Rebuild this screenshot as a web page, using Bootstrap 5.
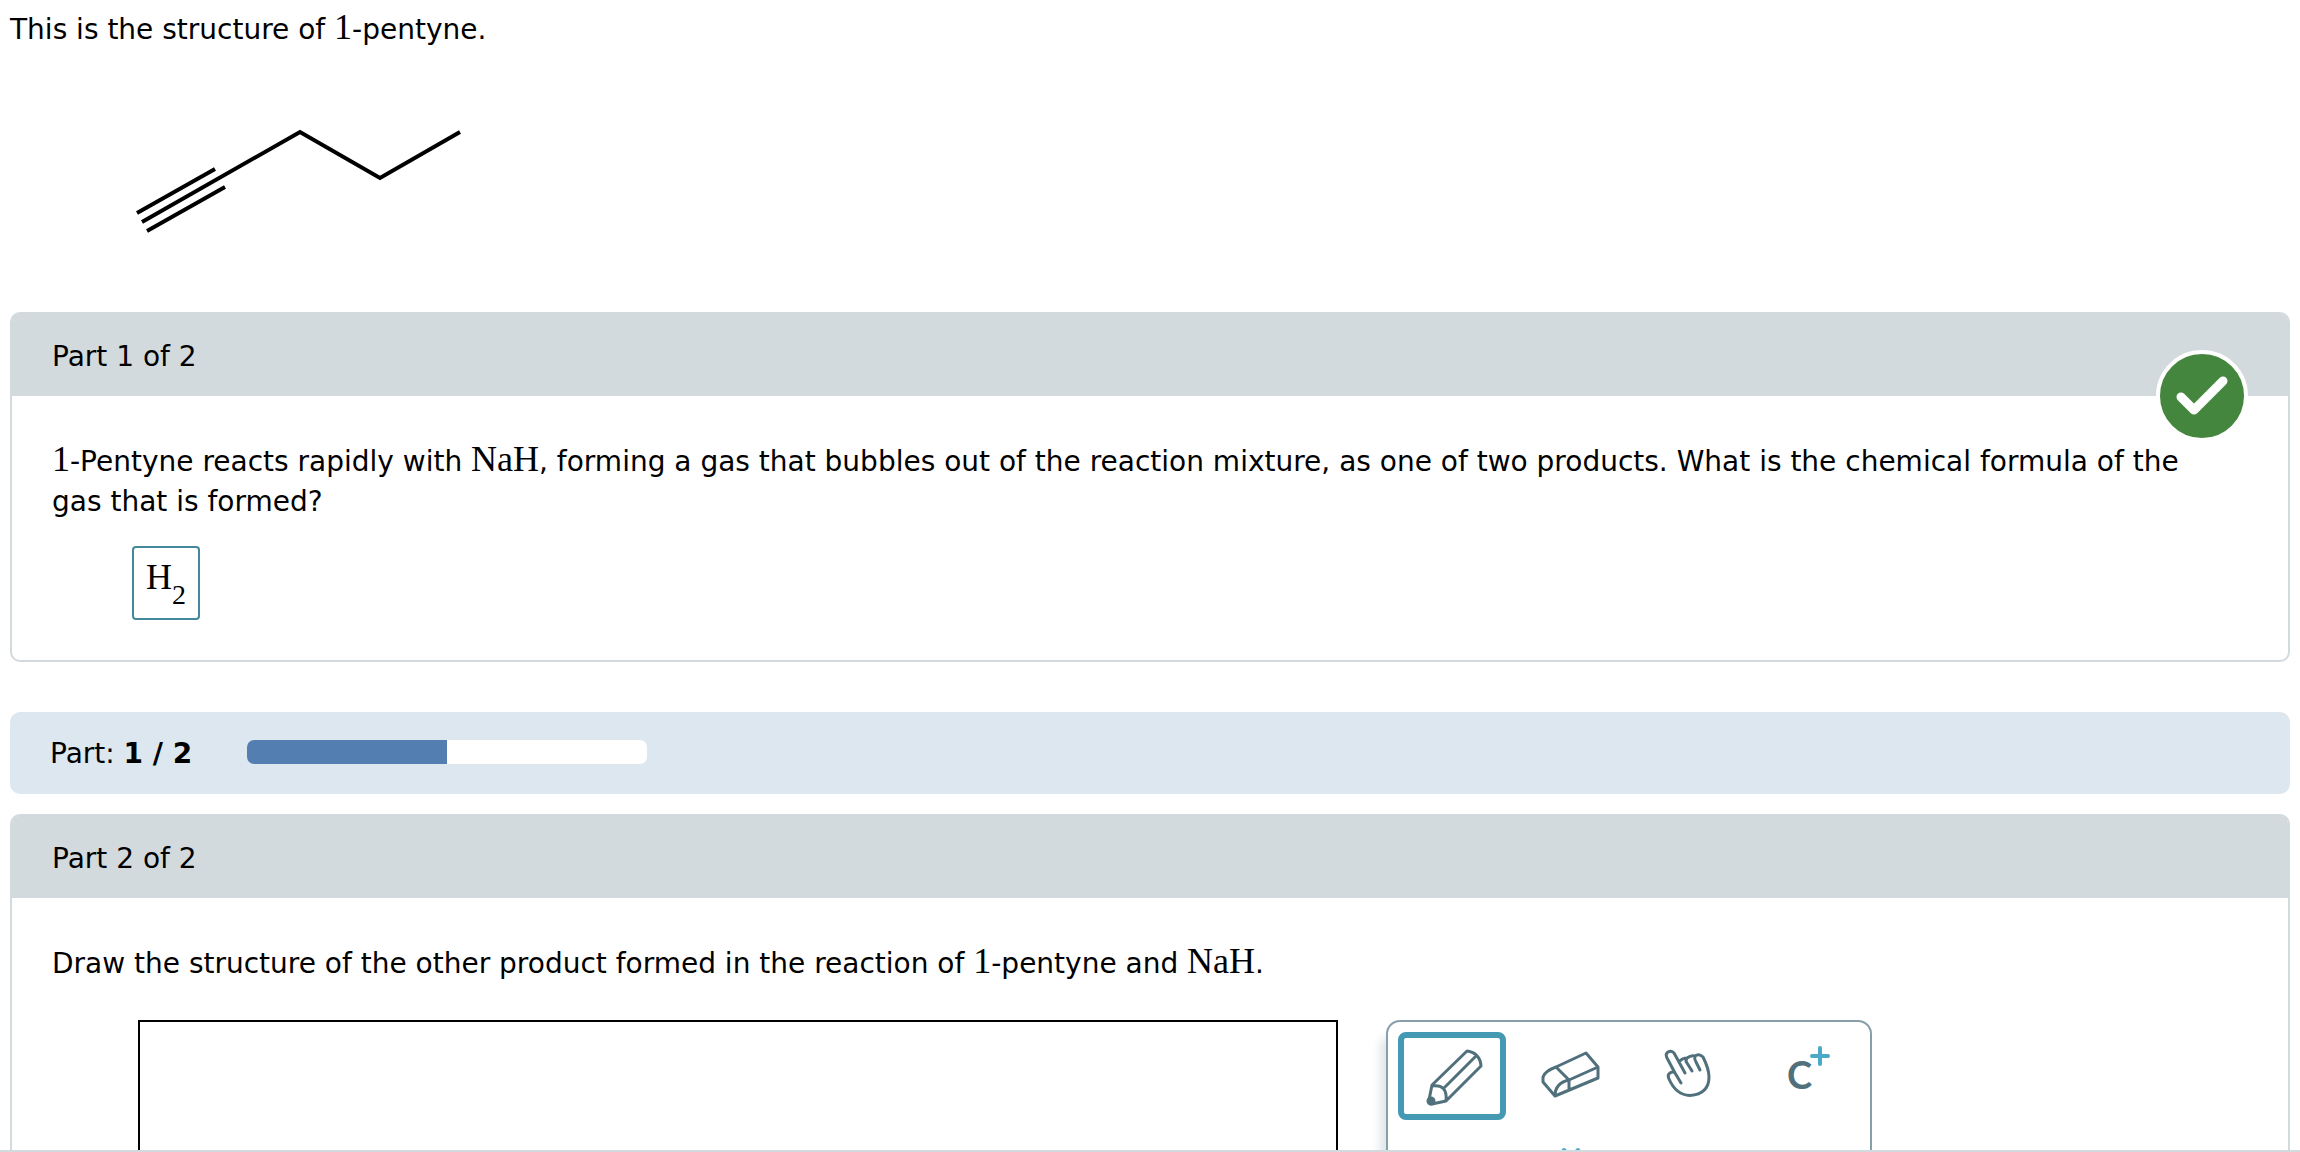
<!DOCTYPE html>
<html lang="en">
<head>
<meta charset="utf-8">
<meta name="viewport" content="width=device-width, initial-scale=1">
<title>1-Pentyne reaction</title>
<link href="https://cdn.jsdelivr.net/npm/bootstrap@5.3.0/dist/css/bootstrap.min.css" rel="stylesheet">
<style>
  body { font-family: Verdana, "DejaVu Sans", sans-serif; font-size: 28px; line-height: 40px; color: #000; background: #fff; }
  .page-scroll { min-height: 0; overflow-y: auto; scrollbar-width: none; padding: 10px; }
  .page-scroll::-webkit-scrollbar { display: none; }
  .page-foot { border-top: 2px solid #d3dadd; }
  .chem { font-family: "Liberation Serif", serif; font-size: 36px; line-height: 32px; }
  .chem sub { font-size: 28px; line-height: 28px; bottom: auto; vertical-align: -15px; }
  .molecule { width: 480px; height: 262px; }
  .part-panel { border: 2px solid #d3dadd; border-radius: 10px; }
  .part-head { background: #d3dadd; padding: 23px 40px 19px; border-radius: 7px 7px 0 0; font-size: 28px; line-height: 40px; }
  .part-body { padding: 46px 80px 40px 40px; }
  .result-badge { top: 36px; right: 40px; width: 92px; height: 92px; border: 4px solid #fff; border-radius: 50%; background: #44863e; }
  .answer-box { width: 68px; height: 74px; margin: 24px 0 0 80px; border: 2px solid #44889c; border-radius: 4px; padding: 13px 0 0; }
  .progress-strip { background: #dde7ef; border-radius: 10px; margin: 50px 0 20px; padding: 22px 40px 20px; gap: 40px; }
  .strip-label { min-width: 157px; }
  .part-meter { width: 400px; height: 24px; margin-top: 6px; border-radius: 7px; background: #fff; }
  .part-meter .progress-bar { background: #537eb1; }
  .draw-row { margin: 36px 0 0 86px; gap: 48px; }
  .draw-area { width: 1200px; height: 560px; border: 2px solid #000; }
  .toolbox { display: grid; grid-template-columns: repeat(4, 108px); grid-auto-rows: 88px; gap: 10px; padding: 10px; border: 2px solid #879fa8; border-radius: 14px; background: #fff; box-shadow: -10px 12px 10px -4px #dfe5e8; }
  .tool { padding: 0; border: 6px solid transparent; border-radius: 8px; background: #fff; color: #50707c; }
  .tool.active { border-color: #4499b3; }
  .tool svg { display: block; width: 96px; height: 76px; fill: none; stroke: currentColor; stroke-width: 3; stroke-linejoin: round; stroke-linecap: round; }
  .tool .letter { fill: currentColor; stroke: none; font: bold 38px Lato, sans-serif; }
</style>
<script src="https://cdn.jsdelivr.net/npm/bootstrap@5.3.0/dist/js/bootstrap.bundle.min.js"></script>
</head>
<body class="d-flex flex-column vh-100">
<main class="page-scroll flex-grow-1">
  <p class="m-0">This is the structure of <span class="chem">1</span>-pentyne.</p>
  <svg class="molecule d-block" viewBox="10 50 480 262" fill="none" stroke="#000" stroke-width="4" role="img" aria-label="Skeletal structure of 1-pentyne">
    <path d="M142 222L300 132L380 178L460 132M137 213L215 169M147 231L225 187"/>
  </svg>

  <section class="part-panel position-relative">
    <h2 class="part-head m-0 fw-normal">Part 1 of 2</h2>
    <div class="result-badge position-absolute">
      <svg class="d-block" width="84" height="84" viewBox="0 0 84 84" fill="none" stroke="#fff" stroke-width="9" stroke-linecap="round" stroke-linejoin="round" role="img" aria-label="Correct"><path d="M21 43L34 56L63 27"/></svg>
    </div>
    <div class="part-body">
      <p class="m-0"><span class="chem">1</span>-Pentyne reacts rapidly with <span class="chem">NaH</span>, forming a gas that bubbles out of the reaction mixture, as one of two products. What is the chemical formula of the gas that is formed?</p>
      <div class="answer-box text-center chem">H<sub>2</sub></div>
    </div>
  </section>

  <section class="progress-strip d-flex align-items-start">
    <div class="strip-label">Part: <strong>1 / 2</strong></div>
    <div class="part-meter progress" role="progressbar" aria-label="Parts complete" aria-valuenow="1" aria-valuemin="0" aria-valuemax="2">
      <div class="progress-bar" style="width: 50%"></div>
    </div>
  </section>

  <section class="part-panel">
    <h2 class="part-head m-0 fw-normal">Part 2 of 2</h2>
    <div class="part-body">
      <p class="m-0">Draw the structure of the other product formed in the reaction of <span class="chem">1</span>-pentyne and <span class="chem">NaH</span>.</p>
      <div class="draw-row d-flex align-items-start">
        <div class="draw-area"></div>
        <div class="toolbox" role="toolbar" aria-label="Drawing tools">
          <button type="button" class="tool active" aria-label="Draw">
            <svg viewBox="1404 1038 96 76"><path d="M1467 1051L1432 1085L1429 1100Q1429 1104 1432 1104L1446 1101L1481 1066Q1480 1053 1467 1051ZM1432 1086Q1448 1084 1446 1101M1444 1088L1476 1056"/><circle cx="1431" cy="1101" r="3" fill="currentColor"/></svg>
          </button>
          <button type="button" class="tool" aria-label="Erase">
            <svg viewBox="1522 1038 96 76"><path d="M1556 1067L1586 1053L1598 1067V1078L1555 1096L1543 1082V1077Q1545 1071 1556 1067L1569 1080L1598 1067M1569 1080V1089M1555 1096Q1555 1083 1569 1080"/></svg>
          </button>
          <button type="button" class="tool" aria-label="Move">
            <svg viewBox="1640 1038 96 76"><path d="M1681 1083L1675 1073Q1673 1071 1670 1073Q1667 1075 1669 1079Q1676 1095 1690 1095.500Q1709 1094 1709 1077Q1709 1069 1703 1057Q1699 1053 1695 1056Q1691 1055 1687 1058Q1682 1058 1679 1062L1674 1053Q1671 1050 1668 1052Q1665 1054 1667 1058L1675 1073M1679 1062L1685 1073M1687 1058Q1685 1061 1687 1063L1692 1071M1695 1056Q1694 1059 1696 1062L1700 1070"/></svg>
          </button>
          <button type="button" class="tool" aria-label="Change element or charge">
            <svg viewBox="1758 1038 96 76"><text class="letter" x="1787" y="1089">C</text><path stroke="#49a9c6" stroke-width="4" d="M1812 1056H1828M1820 1048V1064"/></svg>
          </button>
          <span></span>
          <button type="button" class="tool" aria-label="Clear">
            <svg viewBox="1522 1136 96 76"><path stroke="#49a9c6" stroke-width="4" d="M1564 1150L1578 1164M1578 1150L1564 1164"/></svg>
          </button>
        </div>
      </div>
    </div>
  </section>
</main>
<footer class="page-foot"></footer>
</body>
</html>
